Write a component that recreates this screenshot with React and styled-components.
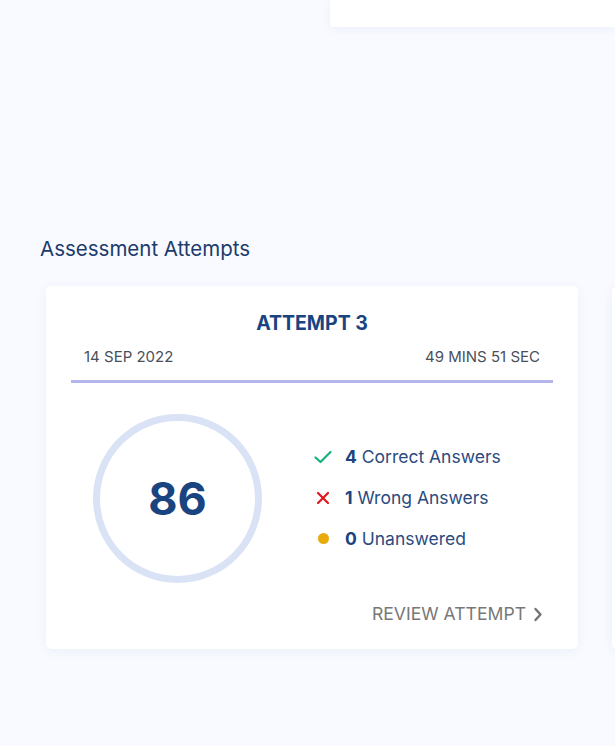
import React from "react";
import styled, { createGlobalStyle } from "styled-components";

const GlobalStyle = createGlobalStyle`
  html, body {
    margin: 0;
    padding: 0;
    background: #f8faff;
    font-family: Inter, "Noto Sans", sans-serif;
  }
`;

const attempts = [
  {
    id: 3,
    date: "14 SEP 2022",
    duration: "49 MINS 51 SEC",
    score: 86,
    correct: 4,
    wrong: 1,
    unanswered: 0,
  },
];

const CheckIcon = () => (
  <svg width="18" height="14" viewBox="0 0 18 14">
    <path d="M1.5 7.5 L6.5 12 L16.5 2" fill="none" stroke="#19b07a" strokeWidth="2.2" strokeLinecap="round" strokeLinejoin="round" />
  </svg>
);

const CrossIcon = () => (
  <svg width="14" height="14" viewBox="0 0 14 14">
    <path d="M2 2 L12 12 M12 2 L2 12" fill="none" stroke="#e0161b" strokeWidth="2.2" strokeLinecap="round" />
  </svg>
);

const Dot = styled.span`
  display: inline-block;
  width: 11px;
  height: 11px;
  border-radius: 50%;
  background: #e8ab0c;
`;

const Chevron = () => (
  <svg width="10" height="15" viewBox="0 0 10 15">
    <path d="M2.5 2 L7.5 7.5 L2.5 13" fill="none" stroke="#737373" strokeWidth="2.4" strokeLinecap="round" strokeLinejoin="round" />
  </svg>
);

const App = () => {
  return (
    <>
      <GlobalStyle />
      <Page>
        <TopCard />
        <SectionTitle>Assessment Attempts</SectionTitle>
        <CardRow>
          {attempts.map(a => (
            <Card key={a.id}>
              <CardHeader>
                <AttemptTitle>ATTEMPT {a.id}</AttemptTitle>
                <MetaRow>
                  <span>{a.date}</span>
                  <span>{a.duration}</span>
                </MetaRow>
              </CardHeader>
              <CardBody>
                <ScoreCircle>{a.score}</ScoreCircle>
                <Results>
                  <ResultRow>
                    <IconBox>
                      <CheckIcon />
                    </IconBox>
                    <span>
                      <b>{a.correct}</b> Correct Answers
                    </span>
                  </ResultRow>
                  <ResultRow>
                    <IconBox>
                      <CrossIcon />
                    </IconBox>
                    <span>
                      <b>{a.wrong}</b> Wrong Answers
                    </span>
                  </ResultRow>
                  <ResultRow>
                    <IconBox>
                      <Dot />
                    </IconBox>
                    <span>
                      <b>{a.unanswered}</b> Unanswered
                    </span>
                  </ResultRow>
                </Results>
              </CardBody>
              <ReviewLink>
                REVIEW ATTEMPT <Chevron />
              </ReviewLink>
            </Card>
          ))}
          <PeekCard />
        </CardRow>
      </Page>
    </>
  );
};

export default App;

const Page = styled.div`
  width: 615px;
  height: 746px;
  overflow: hidden;
  display: flex;
  flex-direction: column;
`;

const TopCard = styled.div`
  margin-left: 330px;
  height: 27px;
  background: #ffffff;
  border-bottom-left-radius: 4px;
  box-shadow: rgba(30, 60, 140, 0.06) 0px 2px 10px;
`;

const SectionTitle = styled.h2`
  margin: 209px 0 0 40px;
  font-size: 20.5px;
  font-weight: 400;
  line-height: 26px;
  color: #1c3a6b;
`;

const CardRow = styled.div`
  display: flex;
  gap: 34px;
  margin-top: 24px;
  padding-left: 46px;
`;

const Card = styled.div`
  flex: 0 0 532px;
  height: 363px;
  box-sizing: border-box;
  background: #ffffff;
  border-radius: 5px;
  box-shadow: rgba(30, 60, 140, 0.06) 0px 2px 12px;
  padding: 25px 25px 0;
  display: flex;
  flex-direction: column;
`;

const PeekCard = styled(Card)``;

const CardHeader = styled.div`
  border-bottom: 3px solid #b4b5ea;
  padding: 0 13px 13px;
`;

const AttemptTitle = styled.div`
  text-align: center;
  font-size: 19.5px;
  font-weight: 700;
  line-height: 24px;
  color: #1a4480;
`;

const MetaRow = styled.div`
  display: flex;
  justify-content: space-between;
  margin-top: 12px;
  font-size: 15px;
  line-height: 20px;
  color: #4a4f5a;
`;

const CardBody = styled.div`
  display: flex;
  align-items: center;
  margin-top: 31px;
  padding-left: 22px;
`;

const ScoreCircle = styled.div`
  width: 169px;
  height: 169px;
  box-sizing: border-box;
  border: 7px solid #d9e3f5;
  border-radius: 50%;
  display: flex;
  align-items: center;
  justify-content: center;
  font-size: 45px;
  font-weight: 700;
  color: #1a4480;
`;

const Results = styled.div`
  display: flex;
  flex-direction: column;
  gap: 18px;
  margin-left: 51px;
  margin-top: -2px;
`;

const ResultRow = styled.div`
  display: flex;
  align-items: center;
  font-size: 17.5px;
  line-height: 23px;
  color: #2b4b80;

  b {
    font-weight: 700;
    color: #1a4480;
  }
`;

const IconBox = styled.span`
  width: 20px;
  display: flex;
  justify-content: center;
  margin-right: 12px;
`;

const ReviewLink = styled.div`
  margin-top: auto;
  margin-bottom: 25px;
  align-self: flex-end;
  display: flex;
  align-items: center;
  gap: 7px;
  padding-right: 10px;
  font-size: 17.6px;
  line-height: 20px;
  color: #787878;
`;
